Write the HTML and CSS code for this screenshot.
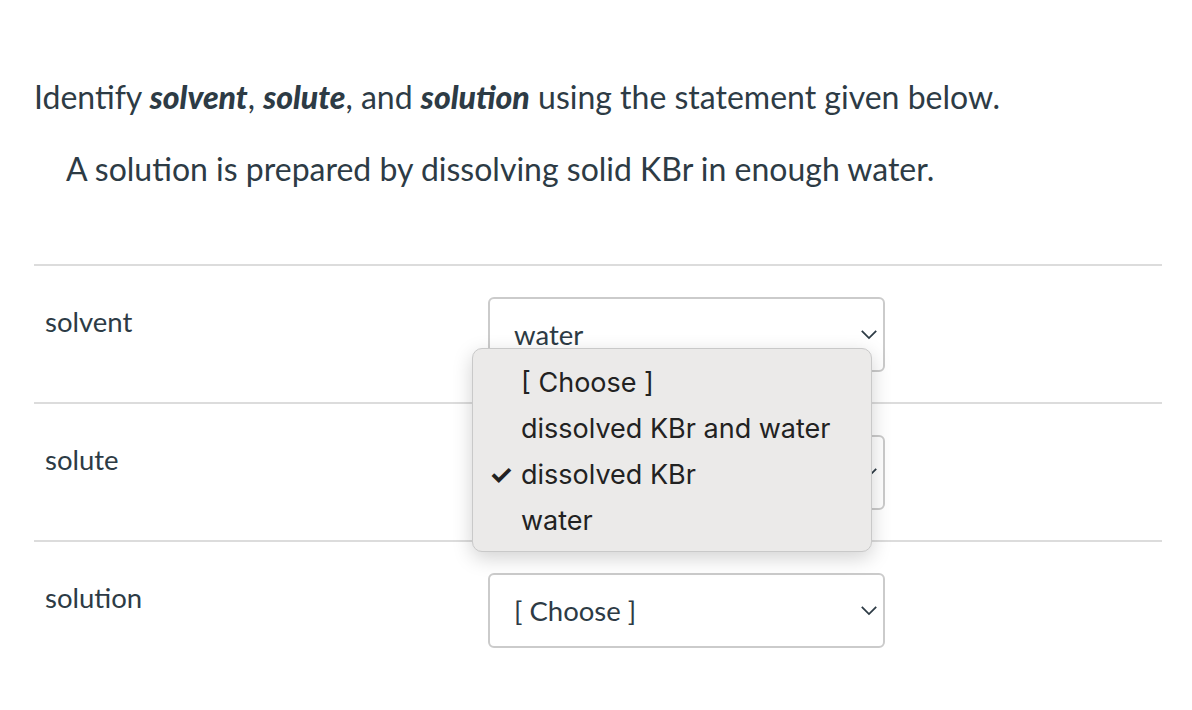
FILE: index.html
```html
<!DOCTYPE html>
<html>
    <head>
        <meta name="viewport" content="width=device-width, initial-scale=1" />
        <link rel="stylesheet" href="styles.css">
    </head>
    <body class="maincontainer">
        <div class="question">
            <p class="prompt">Identify <strong><em>solvent</em></strong>, <strong><em>solute</em></strong>, and <strong><em>solution</em></strong> using the statement given below.</p>
            <p class="statement">A solution is prepared by dissolving solid KBr in enough water.</p>

            <div class="answers">
                <div class="row">
                    <span class="label">solvent</span>
                    <div class="select">
                        <span>water</span>
                        <svg class="chevron" viewBox="0 0 20 12"><path d="M2 2 L10 10 L18 2"/></svg>
                    </div>
                </div>
                <div class="row">
                    <span class="label">solute</span>
                    <div class="select">
                        <span class="covered">dissolved KBr</span>
                        <svg class="chevron" viewBox="0 0 20 12"><path d="M2 2 L10 10 L18 2"/></svg>
                    </div>
                </div>
                <div class="row">
                    <span class="label">solution</span>
                    <div class="select">
                        <span>[ Choose ]</span>
                        <svg class="chevron" viewBox="0 0 20 12"><path d="M2 2 L10 10 L18 2"/></svg>
                    </div>
                </div>

                <!-- open menu of the second select -->
                <ul class="menu">
                    <li>[ Choose ]</li>
                    <li>dissolved KBr and water</li>
                    <li class="checked">dissolved KBr</li>
                    <li>water</li>
                </ul>
            </div>
        </div>
    </body>
</html>
```

FILE: styles.css
```css
* {
    padding: 0;
    margin: 0;
    box-sizing: border-box;
}

:root {
    --color-text: #2d3b45;
    --color-line: #dcdcdc;
}

body.maincontainer {
    background: white;
    color: var(--color-text);
    font-family: Lato, "Liberation Sans", sans-serif;
}

div.question {
    padding: 74px 30px 0 34px;
}

p.prompt {
    font-size: 32px;
    line-height: 46px;
}
p.prompt strong {
    font-weight: 900;
}

p.statement {
    font-size: 32px;
    line-height: 46px;
    margin: 26px 0 0 32px;
}

div.answers {
    position: relative;
    margin-top: 72px;
}

div.row {
    display: flex;
    height: 138px;
    border-top: 2px solid var(--color-line);
    padding: 31px 0 0 11px;
}

span.label {
    width: 443px;
    font-size: 27.5px;
    line-height: 50px;
}

div.select {
    display: flex;
    align-items: center;
    justify-content: space-between;
    width: 397px;
    height: 75px;
    border: 2px solid #cbcbcb;
    border-radius: 6px;
    padding: 0 5px 0 24px;
    font-size: 27.5px;
    background: white;
}
span.covered {
    visibility: hidden;
}
svg.chevron {
    width: 18px;
    height: 11px;
    fill: none;
    stroke: var(--color-text);
    stroke-width: 2;
}

ul.menu {
    position: absolute;
    top: 84px;
    left: 438px;
    width: 400px;
    height: 204px;
    list-style: none;
    padding: 11px 0 0 0;
    background: #ebeae9;
    border: 1px solid #c9c9c9;
    border-radius: 10px;
    box-shadow: 0 6px 20px rgba(0, 0, 0, 0.18);
    font-family: Inter, "Noto Sans", sans-serif;
    font-size: 27px;
    color: #222;
}
ul.menu li {
    line-height: 46px;
    padding-left: 48px;
    position: relative;
}
ul.menu li.checked::before {
    content: "\2713";
    position: absolute;
    left: 16px;
    font-weight: bold;
}
```
